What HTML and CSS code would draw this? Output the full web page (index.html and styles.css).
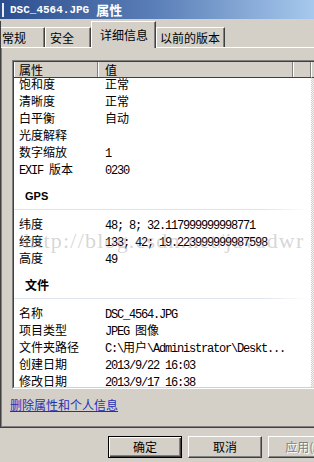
FILE: index.html
```html
<!DOCTYPE html>
<html lang="zh-CN">
<head>
<meta charset="utf-8">
<title>DSC_4564.JPG 属性</title>
<link rel="stylesheet" href="styles.css">
</head>
<body>
<div class="window">
  <div class="titlebar">
    <span class="title-icon"></span>
    <span class="title-file">DSC_4564.JPG</span>
    <span class="title-cjk">属性</span>
  </div>
  <div class="tabctl">
    <div class="tabs">
      <div class="tab tab-1">常规</div>
      <div class="tab tab-2">安全</div>
      <div class="tab tab-active">详细信息</div>
      <div class="tab tab-4">以前的版本</div>
    </div>
    <div class="panel">
      <div class="list">
        <div class="list-inner">
          <div class="list-main">
            <div class="lv-header">
              <div class="lv-col lv-col-1">属性</div>
              <div class="lv-col lv-col-2">值</div>
              <div class="lv-col lv-col-3"></div>
            </div>
            <div class="lv-body">
              <div class="lv-rows">
                <div class="row"><span class="k">饱和度</span><span class="v">正常</span></div>
                <div class="row"><span class="k">清晰度</span><span class="v">正常</span></div>
                <div class="row"><span class="k">白平衡</span><span class="v">自动</span></div>
                <div class="row"><span class="k">光度解释</span><span class="v"></span></div>
                <div class="row"><span class="k">数字缩放</span><span class="v"><span class="m">1</span></span></div>
                <div class="row"><span class="k"><span class="m">EXIF </span>版本</span><span class="v"><span class="m">0230</span></span></div>
                <div class="group">
                  <div class="group-title group-title-latin">GPS</div>
                  <div class="group-line"></div>
                </div>
                <div class="row"><span class="k">纬度</span><span class="v"><span class="m">48; 8; 32.117999999998771</span></span></div>
                <div class="row"><span class="k">经度</span><span class="v"><span class="m">133; 42; 19.223999999987598</span></span></div>
                <div class="row"><span class="k">高度</span><span class="v"><span class="m">49</span></span></div>
                <div class="group">
                  <div class="group-title">文件</div>
                  <div class="group-line"></div>
                </div>
                <div class="row"><span class="k">名称</span><span class="v"><span class="m">DSC_4564.JPG</span></span></div>
                <div class="row"><span class="k">项目类型</span><span class="v"><span class="m">JPEG </span>图像</span></div>
                <div class="row"><span class="k">文件夹路径</span><span class="v"><span class="m">C:\</span>用户<span class="m">\Administrator\Deskt...</span></span></div>
                <div class="row"><span class="k">创建日期</span><span class="v"><span class="m">2013/9/22 16:03</span></span></div>
                <div class="row"><span class="k">修改日期</span><span class="v"><span class="m">2013/9/17 16:38</span></span></div>
              </div>
            </div>
          </div>
          <div class="scroll">
            <div class="sb-btn"></div>
            <div class="sb-track"></div>
          </div>
        </div>
      </div>
      <a class="link" href="#">删除属性和个人信息</a>
    </div>
  </div>
  <div class="buttons">
    <button class="btn btn-default" type="button">确定</button>
    <button class="btn" type="button">取消</button>
    <button class="btn btn-disabled" type="button" disabled>应用(A)</button>
  </div>
  <div class="watermark">http://blog.csdn.net/javadwr</div>
</div>
</body>
</html>
```
FILE: styles.css
```css
html, body {
  margin: 0;
  padding: 0;
  overflow: hidden;
}
body {
  width: 314px;
  height: 462px;
  background: #d4d0c8;
  font-family: "Noto Sans CJK SC", "Noto Sans", sans-serif;
  font-size: 12px;
  color: #000;
}
.window {
  position: relative;
  width: 314px;
  height: 462px;
}
.titlebar {
  height: 19px;
  display: flex;
  align-items: center;
  background: linear-gradient(90deg, #2c4e8e 0%, #5b7fb8 50%, #a7c9ed 100%);
  color: #fff;
  font-weight: bold;
}
.title-icon {
  width: 2px;
  height: 14px;
  background: #e8eef8;
  margin-left: 2px;
  margin-right: 6px;
}
.title-file {
  font-family: "Liberation Mono", monospace;
  font-size: 11px;
  line-height: 14px;
}
.title-cjk {
  font-size: 13px;
  line-height: 14px;
  margin-left: 7px;
}
.tabctl {
  border-left: 1px solid #404040;
  width: 340px;
}
.tabs {
  display: flex;
  align-items: flex-end;
  height: 26px;
  margin-top: 2px;
}
.tab {
  box-sizing: border-box;
  height: 20px;
  padding-top: 4px;
  line-height: 12px;
  border-top: 1px solid #fff;
  border-left: 1px solid #fff;
  border-right: 1px solid #404040;
  box-shadow: inset -1px 0 #808080;
  white-space: nowrap;
  background: #d4d0c8;
}
.tab-1 {
  width: 44px;
  border-left: none;
  padding-left: 1px;
}
.tab-2 {
  width: 46px;
  padding-left: 4px;
}
.tab-active {
  width: 65px;
  height: 27px;
  padding-top: 7px;
  padding-left: 8px;
  margin-bottom: -1px;
  position: relative;
  z-index: 1;
}
.tab-4 {
  width: 69px;
  padding-left: 3px;
}
.panel {
  box-sizing: border-box;
  height: 381px;
  border-top: 1px solid #fff;
  border-bottom: 1px solid #404040;
  box-shadow: inset 1px 0 #808080, inset 0 -1px #808080;
  padding-top: 12px;
}
.list {
  box-sizing: border-box;
  width: 320px;
  height: 329px;
  margin-left: 11px;
  border: 1px solid;
  border-color: #808080 #fff #fff #808080;
  background: #fff;
}
.list-inner {
  box-sizing: border-box;
  height: 100%;
  border: 1px solid;
  border-color: #404040 #d4d0c8 #d4d0c8 #404040;
  display: flex;
}
.list-main {
  width: 297px;
  display: flex;
  flex-direction: column;
  overflow: hidden;
}
.lv-header {
  display: flex;
  height: 16px;
  box-sizing: border-box;
  border-bottom: 1px solid #404040;
  background: #d4d0c8;
  flex: none;
}
.lv-col {
  box-sizing: border-box;
  height: 15px;
  line-height: 15px;
  border-left: 1px solid #fff;
  border-right: 1px solid #808080;
  white-space: nowrap;
}
.lv-col-1 {
  width: 84px;
  padding-left: 4px;
}
.lv-col-2 {
  width: 195px;
  padding-left: 6px;
}
.lv-col-3 {
  width: 18px;
}
.lv-body {
  flex: 1;
  overflow: hidden;
}
.lv-rows {
  margin-top: -3px;
}
.row {
  display: grid;
  grid-template-columns: 91px 1fr;
  height: 17px;
  line-height: 17px;
  white-space: nowrap;
}
.k {
  padding-left: 5px;
}
.m {
  font-family: "Liberation Mono", monospace;
  font-size: 12px;
  letter-spacing: -1.2px;
}
.group {
  box-sizing: border-box;
  height: 38px;
  padding-top: 13px;
}
.group-title {
  height: 12px;
  line-height: 12px;
  padding-left: 11px;
  font-weight: bold;
  font-size: 12px;
}
.group-title-latin {
  font-family: "Liberation Sans", sans-serif;
  font-size: 11px;
}
.group-line {
  margin-top: 7px;
  height: 1px;
  width: 295px;
  background: linear-gradient(90deg, #dfe5ee 0%, #dfe5ee 85%, #fff 100%);
}
.scroll {
  width: 17px;
  display: flex;
  flex-direction: column;
}
.sb-btn {
  box-sizing: border-box;
  height: 16px;
  background: #d4d0c8;
  border-left: 1px solid #fff;
  border-bottom: 1px solid #404040;
}
.sb-track {
  flex: 1;
  background: repeating-conic-gradient(#f4f3ef 0 25%, #d4d0c8 0 50%) 0 0 / 2px 2px;
}
.link {
  display: inline-block;
  margin-top: 9px;
  margin-left: 9px;
  line-height: 14px;
  color: #1f31b8;
  text-decoration: underline;
}
.buttons {
  display: flex;
  gap: 6px;
  padding: 8px 0 0 108px;
}
.btn {
  box-sizing: border-box;
  flex: none;
  width: 74px;
  height: 22px;
  padding: 0;
  margin: 0;
  font-family: "Noto Sans CJK SC", sans-serif;
  font-size: 12px;
  line-height: 18px;
  color: #000;
  background: #d4d0c8;
  border: 1px solid;
  border-color: #fff #404040 #404040 #fff;
  box-shadow: inset -1px -1px #808080;
  border-radius: 0;
}
.btn-default {
  border-color: #000;
  box-shadow: inset 1px 1px #fff, inset -1px -1px #404040, inset -2px -2px #808080;
}
.btn-disabled {
  color: #808080;
  text-shadow: 1px 1px #fff;
}
.watermark {
  position: absolute;
  left: 24px;
  top: 230px;
  font-family: "Liberation Serif", serif;
  font-size: 22px;
  line-height: 22px;
  letter-spacing: 1.2px;
  color: rgba(150, 150, 150, 0.4);
  white-space: nowrap;
  pointer-events: none;
}
```
